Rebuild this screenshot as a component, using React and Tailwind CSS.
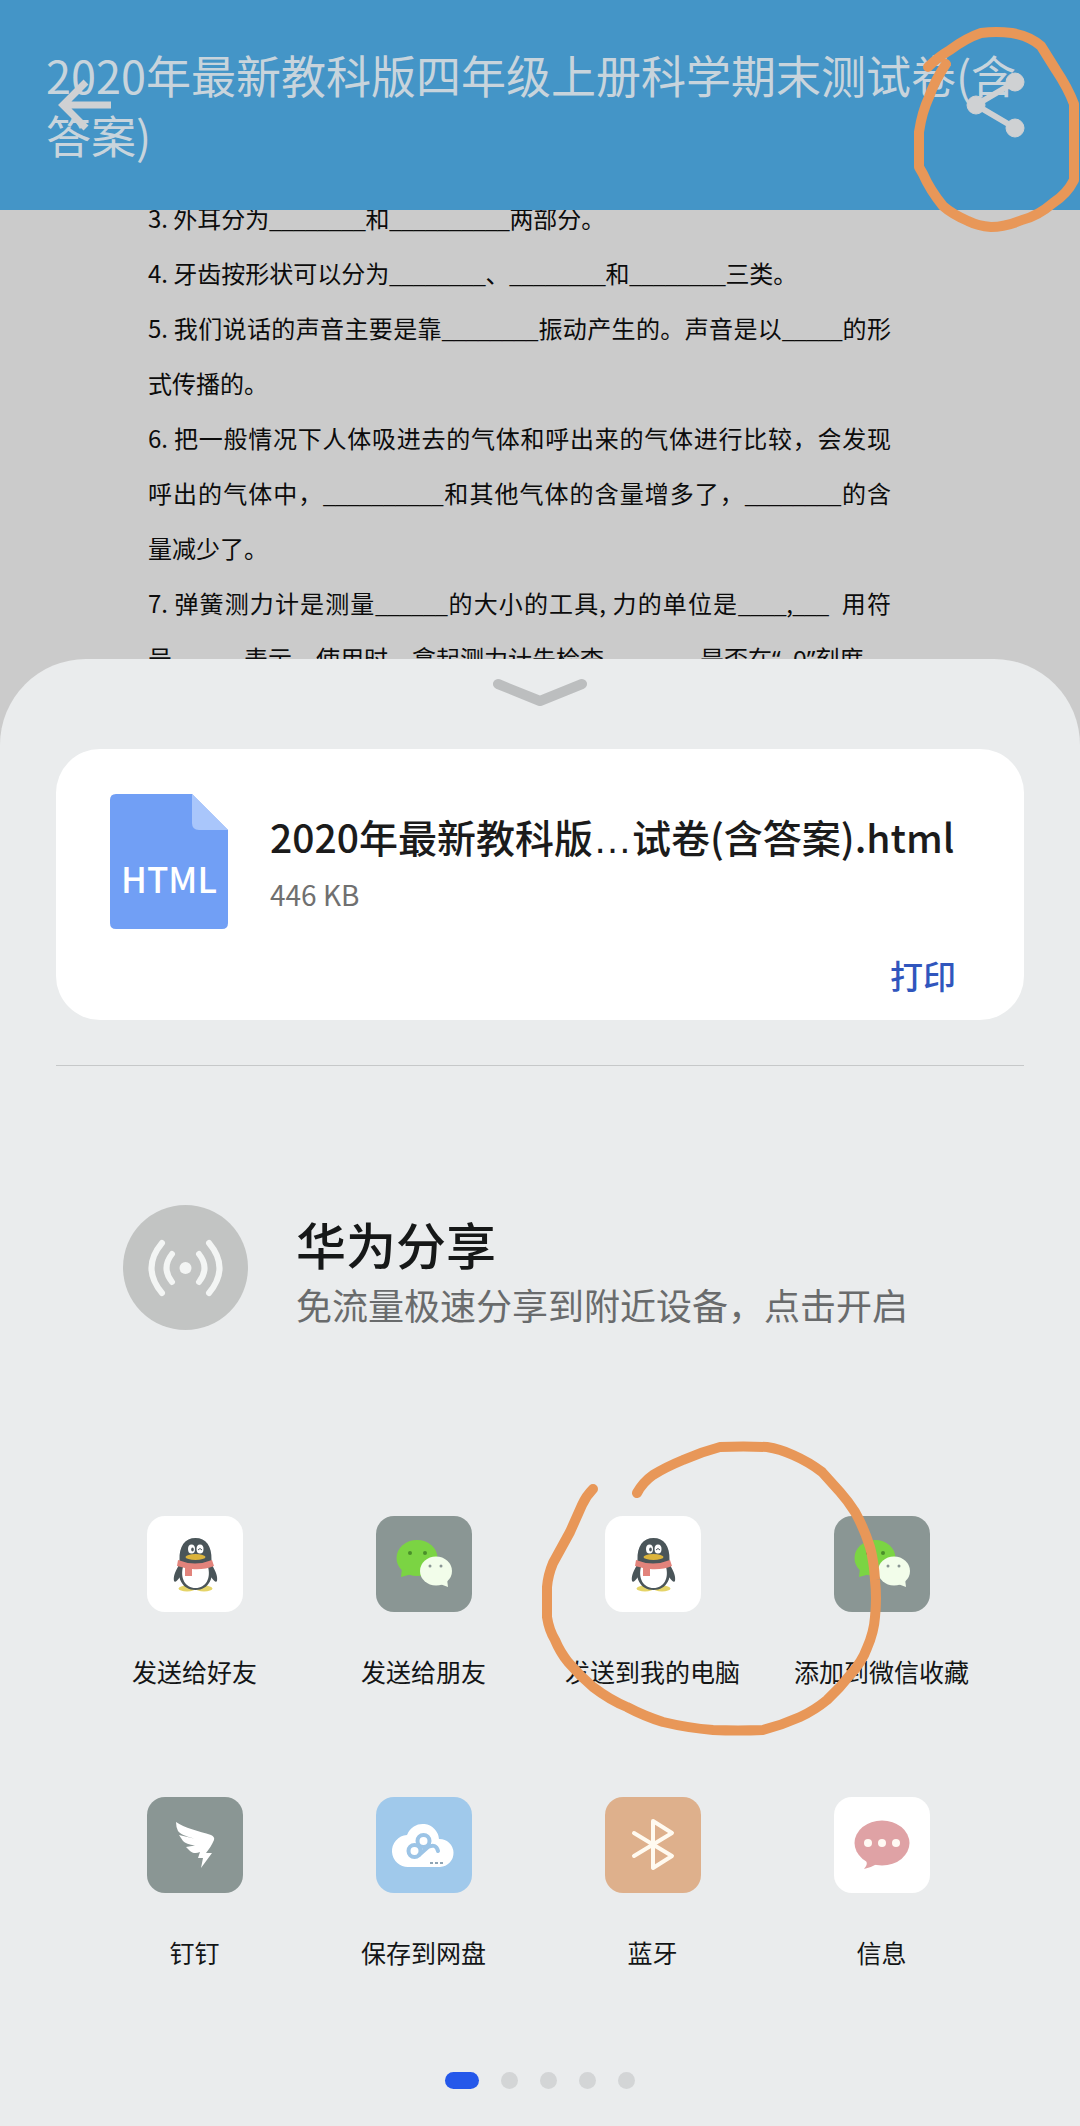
import React from 'react';

const INK = '#e89758';

function Blank({ n }) {
    return <span className="leading-none font-['Liberation_Serif',serif]">{'_'.repeat(n)}</span>;
}

function Line({ full, children }) {
    return <p className={full ? 'whitespace-pre-wrap text-justify [text-align-last:justify]' : 'whitespace-pre-wrap'}>{children}</p>;
}

function Header() {
    return (
        <header className="relative z-10 bg-[#4495c7] px-[46px] pt-[45px] pb-[45px]">
            <h1 className="text-[45px] leading-[60px] text-[#c8d4dc]">
                2020年最新教科版四年级上册科学期末测试卷(含答案)
            </h1>
            <button aria-label="返回" className="absolute left-[55px] top-[75px]">
                <svg width="60" height="60" viewBox="0 0 60 60" fill="none" stroke="#cfd1d3" strokeWidth="7">
                    <path d="M56 30H8M31 7L8 30L31 53" />
                </svg>
            </button>
            <button aria-label="分享" className="absolute right-[50px] top-[70px]">
                <svg width="70" height="70" viewBox="960 70 70 70" fill="#cfd1d3" stroke="#cfd1d3">
                    <path d="M1015 82L976 105L1015 128" fill="none" strokeWidth="6" />
                    <circle cx="976" cy="105" r="9" />
                    <circle cx="1015" cy="82" r="9" />
                    <circle cx="1015" cy="128" r="9" />
                </svg>
            </button>
            <svg className="pointer-events-none absolute right-0 top-[20px]" width="180" height="220" viewBox="900 20 180 220" fill="none" stroke={INK} strokeWidth="10" strokeLinecap="round" strokeLinejoin="round">
                <path d="M928 67Q938 57 950 50Q966 38 981 33Q996 31 1012 33Q1030 36 1041 46L1056 70Q1068 88 1074 104V180Q1067 194 1053 203Q1038 216 1022 220Q1005 227 991 227Q978 226 968 221Q952 214 943 206Q930 190 923 174L919 167V132Q922 112 929 97Q935 80 946 64" />
            </svg>
        </header>
    );
}

function Document() {
    return (
        <main className="-mt-5 pr-[189px] pl-[148px] text-[24px] leading-[55px] text-[#0c0c0c]">
            <Line>3. 外耳分为<Blank n={8} />和<Blank n={10} />两部分。</Line>
            <Line>4. 牙齿按形状可以分为<Blank n={8} />、<Blank n={8} />和<Blank n={8} />三类。</Line>
            <Line full>5. 我们说话的声音主要是靠<Blank n={8} />振动产生的。声音是以<Blank n={5} />的形</Line>
            <Line>式传播的。</Line>
            <Line full>6. 把一般情况下人体吸进去的气体和呼出来的气体进行比较，会发现</Line>
            <Line full>呼出的气体中，<Blank n={10} />和其他气体的含量增多了，<Blank n={8} />的含</Line>
            <Line>量减少了。</Line>
            <Line full>7. 弹簧测力计是测量<Blank n={6} />的大小的工具, 力的单位是<Blank n={4} />,<Blank n={3} />&nbsp; 用符</Line>
            <Line>号<Blank n={6} />表示，使用时，拿起测力计先检查<Blank n={8} />是否在<span className="leading-none font-['Noto_Sans',sans-serif]">“&nbsp; 0”</span>刻度</Line>
        </main>
    );
}

function FileCard() {
    return (
        <section className="mx-[56px] rounded-[44px] bg-white pt-[45px] pr-[68px] pb-5 pl-[54px]">
            <div className="flex">
                <div className="relative flex h-[135px] w-[118px] shrink-0 justify-center">
                    <svg className="absolute inset-0" width="118" height="135" viewBox="0 0 118 135">
                        <path d="M6 0H82L118 36V129Q118 135 112 135H6Q0 135 0 129V6Q0 0 6 0Z" fill="#719ff5" />
                        <path d="M82 0L118 36H89Q82 36 82 29Z" fill="#a9c6fb" />
                    </svg>
                    <span className="relative pt-[62px] text-[35px] leading-[44px] font-medium text-white">HTML</span>
                </div>
                <div className="ml-[42px] whitespace-nowrap">
                    <h2 className="pt-3 text-[39px] leading-[60px] font-medium text-[#1b1b1b]">
                        2020年最新教科版<span className="leading-none font-['Liberation_Sans',sans-serif]">…</span>试卷(含答案).html
                    </h2>
                    <p className="pt-2 text-[28px] leading-[40px] text-[#707070]">446 KB</p>
                </div>
            </div>
            <div className="mt-[21px] flex justify-end">
                <button className="text-[33px] leading-[50px] font-medium text-[#3056bd]">打印</button>
            </div>
        </section>
    );
}

function NearbyShare() {
    return (
        <button className="mt-[139px] ml-[123px] flex gap-[48px] text-left">
            <svg width="125" height="125" viewBox="0 0 125 125" fill="none" stroke="#f3f5f4" strokeWidth="6" strokeLinecap="round">
                <circle cx="62.5" cy="62.5" r="62.5" fill="#c2c4c3" stroke="none" />
                <circle cx="62.5" cy="63" r="6" fill="#f3f5f4" stroke="none" />
                <path d="M49 49Q38 63 49 77M76 49Q87 63 76 77M39 38Q18 63 39 88M86 38Q107 63 86 88" />
            </svg>
            <span className="flex flex-col pt-1.5">
                <span className="text-[50px] leading-[64px] font-medium text-[#161818]">华为分享</span>
                <span className="pt-1 text-[36px] leading-[50px] text-[#696b6c]">免流量极速分享到附近设备，点击开启</span>
            </span>
        </button>
    );
}

function QQIcon() {
    return (
        <svg viewBox="0 0 96 96" className="size-24 rounded-[18px] bg-white">
            <ellipse cx="40" cy="72.5" rx="8.5" ry="3" fill="#e5d468" />
            <ellipse cx="57" cy="72.5" rx="8.5" ry="3" fill="#e5d468" />
            <path d="M32 49C29 54 26 60 27 65C28 67 30 65 33 61ZM65 49C68 54 71 60 70 65C69 67 67 65 64 61Z" fill="#4a5559" />
            <path d="M48.5 22C38 22 32 30 32.5 44C29 62 35 74 48.5 74C62 74 68 62 64.5 44C65 30 59 22 48.5 22Z" fill="#4a5559" />
            <path d="M36 51H61C64 62 59 72 48.5 72C38 72 33 62 36 51Z" fill="#fff" />
            <path d="M31 44Q48 51 65 44L67 50Q57 54 45 53V60H38V52L30 50Z" fill="#e2837b" />
            <ellipse cx="44.5" cy="33" rx="3.5" ry="4.5" fill="#fff" />
            <ellipse cx="53" cy="33" rx="3.5" ry="4.5" fill="#fff" />
            <ellipse cx="45.5" cy="33.5" rx="1.3" ry="2" fill="#4a5559" />
            <path d="M51 34Q53 31 55 34" fill="none" stroke="#4a5559" />
            <ellipse cx="48.5" cy="41" rx="10" ry="3" fill="#dcb43c" />
        </svg>
    );
}

function WeChatIcon() {
    return (
        <svg viewBox="0 0 96 96" className="size-24 rounded-[18px] bg-[#8a9694]">
            <ellipse cx="41" cy="42" rx="20.5" ry="18" fill="#7bd443" />
            <path d="M26 52L25 61L36 58Z" fill="#7bd443" />
            <ellipse cx="60" cy="55" rx="16" ry="14.5" fill="#f2fdea" />
            <path d="M64 68L72 71L71 63Z" fill="#f2fdea" />
            <circle cx="34" cy="37" r="2" fill="#4a8f2a" />
            <circle cx="49" cy="37" r="2" fill="#4a8f2a" />
            <circle cx="54" cy="50" r="1.5" fill="#8a9694" />
            <circle cx="65" cy="50" r="1.5" fill="#8a9694" />
        </svg>
    );
}

function DingTalkIcon() {
    return (
        <svg viewBox="0 0 96 96" className="size-24 rounded-[18px] bg-[#8a9694]">
            <path d="M29 25C37 31 52 34 64 38Q68 40 67 43C65 48 62 52 59 56H65L54 71L56 61H51L53 55C49 57 45 56 43 54L39 50L48 48.5C42 48 38 46 36 44L32 38L47 41.5C38 39 33 37 31 34Q29 30 29 25Z" fill="#fff" />
        </svg>
    );
}

function NetdiskIcon() {
    return (
        <svg viewBox="0 0 96 96" className="size-24 rounded-[18px] bg-[#a0c9eb]">
            <path d="M33 70A16 16 0 0 1 31 38A16.5 16.5 0 0 1 63 42A14 14 0 0 1 64 70Z" fill="#fff" />
            <g fill="none" stroke="#9cc4e6" strokeWidth="4" strokeLinecap="round">
                <circle cx="47.5" cy="44" r="6" />
                <circle cx="38.5" cy="54" r="6" />
                <path d="M43 58L52 50Q60 46 62 54" />
            </g>
            <path d="M54 66H57M59 66H62M64 66H67" stroke="#8fa5b5" strokeWidth="2" />
        </svg>
    );
}

function BluetoothIcon() {
    return (
        <svg viewBox="0 0 96 96" className="size-24 rounded-[18px] bg-[#deb08c]">
            <path d="M29 36L67 59L48 71V24L67 36L29 59" fill="none" stroke="#fffaf0" strokeWidth="4" strokeLinecap="round" strokeLinejoin="round" />
        </svg>
    );
}

function MessageIcon() {
    return (
        <svg viewBox="0 0 96 96" className="size-24 rounded-[18px] bg-white">
            <ellipse cx="48" cy="46" rx="27.5" ry="22.5" fill="#dfa2a5" />
            <path d="M31 61Q35 67 30 72Q36 71 43 67Z" fill="#dfa2a5" />
            <circle cx="34" cy="46" r="4" fill="#fffaf4" />
            <circle cx="48" cy="46" r="4" fill="#fffaf4" />
            <circle cx="62" cy="46" r="4" fill="#fffaf4" />
        </svg>
    );
}

const targets = [
    { label: '发送给好友', Icon: QQIcon },
    { label: '发送给朋友', Icon: WeChatIcon },
    { label: '发送到我的电脑', Icon: QQIcon, circled: true },
    { label: '添加到微信收藏', Icon: WeChatIcon },
    { label: '钉钉', Icon: DingTalkIcon },
    { label: '保存到网盘', Icon: NetdiskIcon },
    { label: '蓝牙', Icon: BluetoothIcon },
    { label: '信息', Icon: MessageIcon },
];

function Targets() {
    return (
        <div className="mt-[186px] grid grid-cols-4 gap-y-[105px] pr-[84px] pl-20">
            {targets.map(({ label, Icon, circled }) => (
                <div key={label} className={circled ? 'relative z-10' : ''}>
                    <button className="flex w-full flex-col items-center">
                        <Icon />
                        <span className="mt-[38px] text-[25px] leading-[42px] whitespace-nowrap text-[#131516]">{label}</span>
                    </button>
                    {circled && (
                        <svg className="pointer-events-none absolute -top-[76px] left-0 max-w-none" width="350" height="300" viewBox="538 1440 350 300" fill="none" stroke={INK} strokeWidth="10" strokeLinecap="round" strokeLinejoin="round">
                            <path d="M593 1489Q586 1496 582 1505L570 1532L553 1563Q548 1575 547 1587V1617Q549 1630 555 1640Q560 1652 568 1662Q580 1676 593 1687Q610 1700 627 1707Q644 1716 663 1722Q688 1728 713 1730Q738 1731 763 1730Q782 1725 800 1717Q815 1710 827 1700Q840 1688 850 1675Q862 1662 867 1648Q874 1632 875 1617Q877 1598 875 1580Q874 1562 870 1547Q864 1528 855 1512Q848 1501 840 1492L822 1472Q809 1462 793 1455Q780 1449 767 1447Q743 1446 720 1447Q701 1452 683 1460Q666 1467 653 1475Q643 1482 637 1493" />
                        </svg>
                    )}
                </div>
            ))}
        </div>
    );
}

export default function App() {
    return (
        <div className="min-h-screen bg-[#cbcbcb] font-['Noto_Sans_CJK_SC',sans-serif]" lang="zh-CN">
            <Header />
            <Document />
            <div className="relative -mt-[26px] rounded-t-[86px] bg-[#eaeced] pb-[37px]">
                <button aria-label="收起" className="mx-auto block pt-[18px] pb-[42px]">
                    <svg width="100" height="30" viewBox="0 0 100 30" fill="none" stroke="#bcbebf" strokeWidth="10" strokeLinecap="round" strokeLinejoin="round">
                        <path d="M8 7L50 24L92 7" />
                    </svg>
                </button>
                <FileCard />
                <hr className="mx-[56px] mt-[45px] border-[#c6c8c9]" />
                <NearbyShare />
                <Targets />
                <div className="mt-[99px] flex justify-center gap-[22px]">
                    <span className="h-[17px] w-[34px] rounded-full bg-[#2558ea]" />
                    <span className="size-[17px] rounded-full bg-[#d3d5d6]" />
                    <span className="size-[17px] rounded-full bg-[#d3d5d6]" />
                    <span className="size-[17px] rounded-full bg-[#d3d5d6]" />
                    <span className="size-[17px] rounded-full bg-[#d3d5d6]" />
                </div>
            </div>
        </div>
    );
}
